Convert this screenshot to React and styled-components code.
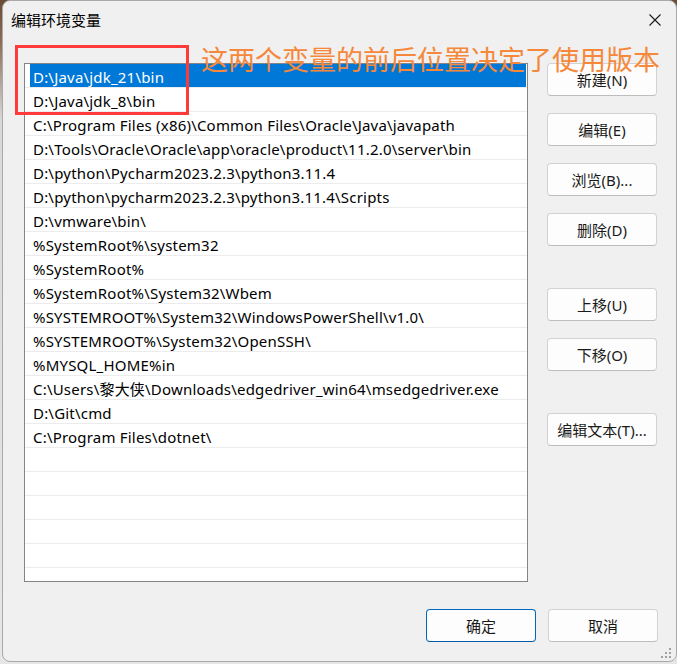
import React from "react";
import styled, { createGlobalStyle } from "styled-components";

const Global = createGlobalStyle`
  html, body { margin: 0; padding: 0; }
  body {
    width: 677px; height: 664px; overflow: hidden;
    background: linear-gradient(to bottom, #6b4a36 0px, #8a6a55 40px, #d9d9d9 120px, #e6e6e6 100%);
    font-family: "Segoe UI", "Noto Sans", "Noto Sans CJK SC", sans-serif;
  }
  #root { height: 664px; }
`;

const Window = styled.div`
  position: relative;
  box-sizing: border-box;
  margin-left: 2px;
  width: 675px;
  height: 662px;
  background: #f0f0f0;
  border: 1px solid #a9a9a9;
  border-radius: 8px;
  display: flex;
  flex-direction: column;
  font-family: "Segoe UI", "Noto Sans", "Noto Sans CJK SC", sans-serif;
  color: #000;
`;

const TitleBar = styled.div`
  height: 38px;
  display: flex;
  align-items: center;
  justify-content: space-between;
  padding-left: 8px;
`;

const Title = styled.div`
  font-family: "Noto Sans CJK SC", sans-serif;
  font-size: 15px;
  line-height: 20px;
  margin-top: -1px;
`;

const CloseBtn = styled.div`
  width: 30px;
  height: 38px;
  display: flex;
  align-items: center;
  justify-content: center;
  margin-right: 6px;
`;

const Body = styled.div`
  display: flex;
  gap: 19px;
  padding: 24px 19px 0 21px;
  flex: 1;
`;

const ListBox = styled.div`
  box-sizing: border-box;
  width: 504px;
  height: 519px;
  border: 1px solid #848484;
  background: #fff;
  overflow: hidden;
`;

const Row = styled.div`
  box-sizing: border-box;
  height: 24px;
  border-bottom: 1px solid #ececec;
  padding-left: 5px;
  padding-right: 1px;
  display: flex;
`;

const Cell = styled.div`
  flex: 1;
  height: 23px;
  overflow: hidden;
  padding-left: 3px;
  font-size: 15px;
  line-height: 26px;
  white-space: nowrap;
  font-family: "Segoe UI", "Noto Sans", "Noto Sans CJK SC", sans-serif;
  letter-spacing: 0.2px;
  background: ${(p) => (p.$selected ? "#0078d7" : "transparent")};
  color: ${(p) => (p.$selected ? "#fff" : "#000")};
`;

const SideButtons = styled.div`
  display: flex;
  flex-direction: column;
  width: 110px;
`;

const Button = styled.button`
  box-sizing: border-box;
  width: 110px;
  height: 33px;
  margin-top: ${(p) => p.$gap || 0}px;
  background: #fdfdfd;
  border: 1px solid #d2d2d2;
  border-bottom-color: #bdbdbd;
  border-radius: 4px;
  font-family: "Segoe UI", "Noto Sans", "Noto Sans CJK SC", sans-serif;
  font-size: 15px;
  color: #1a1a1a;
  padding: 0;
  ${(p) => p.$default && `border: 1px solid #0067c0; border-bottom-color: #0059a8;`}
`;

const Footer = styled.div`
  display: flex;
  justify-content: flex-end;
  gap: 12px;
  padding: 0 18px 19px 0;
`;

const Annotation = styled.div`
  position: absolute;
  left: 198px;
  top: 40px;
  font-family: "Noto Sans CJK SC", sans-serif;
  font-size: 27px;
  line-height: 36px;
  color: #f5883b;
  white-space: nowrap;
`;

const RedBox = styled.div`
  position: absolute;
  left: 12px;
  top: 44px;
  width: 174px;
  height: 70px;
  box-sizing: border-box;
  border: 3px solid #fd3b3b;
`;

const Grip = styled.svg`
  position: absolute;
  right: 3px;
  bottom: 1px;
`;

const paths = [
  "D:\\Java\\jdk_21\\bin",
  "D:\\Java\\jdk_8\\bin",
  "C:\\Program Files (x86)\\Common Files\\Oracle\\Java\\javapath",
  "D:\\Tools\\Oracle\\Oracle\\app\\oracle\\product\\11.2.0\\server\\bin",
  "D:\\python\\Pycharm2023.2.3\\python3.11.4",
  "D:\\python\\pycharm2023.2.3\\python3.11.4\\Scripts",
  "D:\\vmware\\bin\\",
  "%SystemRoot%\\system32",
  "%SystemRoot%",
  "%SystemRoot%\\System32\\Wbem",
  "%SYSTEMROOT%\\System32\\WindowsPowerShell\\v1.0\\",
  "%SYSTEMROOT%\\System32\\OpenSSH\\",
  "%MYSQL_HOME%in",
  "C:\\Users\\黎大侠\\Downloads\\edgedriver_win64\\msedgedriver.exe",
  "D:\\Git\\cmd",
  "C:\\Program Files\\dotnet\\",
];

const rows = [...paths, ...Array(6).fill("")];

export default function App() {
  return (
    <>
      <Global />
      <Window>
        <TitleBar>
          <Title>编辑环境变量</Title>
          <CloseBtn>
            <svg width="12" height="12" viewBox="0 0 12 12">
              <path d="M0.5 0.5 L11.5 11.5 M11.5 0.5 L0.5 11.5" stroke="#1a1a1a" strokeWidth="1.1" />
            </svg>
          </CloseBtn>
        </TitleBar>
        <Body>
          <ListBox>
            {rows.map((r, i) => (
              <Row key={i}>
                <Cell $selected={i === 0}>{r}</Cell>
              </Row>
            ))}
          </ListBox>
          <SideButtons>
            <Button>新建(N)</Button>
            <Button $gap={17}>编辑(E)</Button>
            <Button $gap={17}>浏览(B)...</Button>
            <Button $gap={17}>删除(D)</Button>
            <Button $gap={42}>上移(U)</Button>
            <Button $gap={17}>下移(O)</Button>
            <Button $gap={42}>编辑文本(T)...</Button>
          </SideButtons>
        </Body>
        <Footer>
          <Button $default>确定</Button>
          <Button>取消</Button>
        </Footer>
        <Annotation>这两个变量的前后位置决定了使用版本</Annotation>
        <RedBox />
        <Grip width="12" height="12" viewBox="0 0 12 12">
          <rect x="8" y="0" width="2" height="2" fill="#a0a0a0" />
          <rect x="4" y="4" width="2" height="2" fill="#a0a0a0" />
          <rect x="8" y="4" width="2" height="2" fill="#a0a0a0" />
          <rect x="0" y="8" width="2" height="2" fill="#a0a0a0" />
          <rect x="4" y="8" width="2" height="2" fill="#a0a0a0" />
          <rect x="8" y="8" width="2" height="2" fill="#a0a0a0" />
        </Grip>
      </Window>
    </>
  );
}
